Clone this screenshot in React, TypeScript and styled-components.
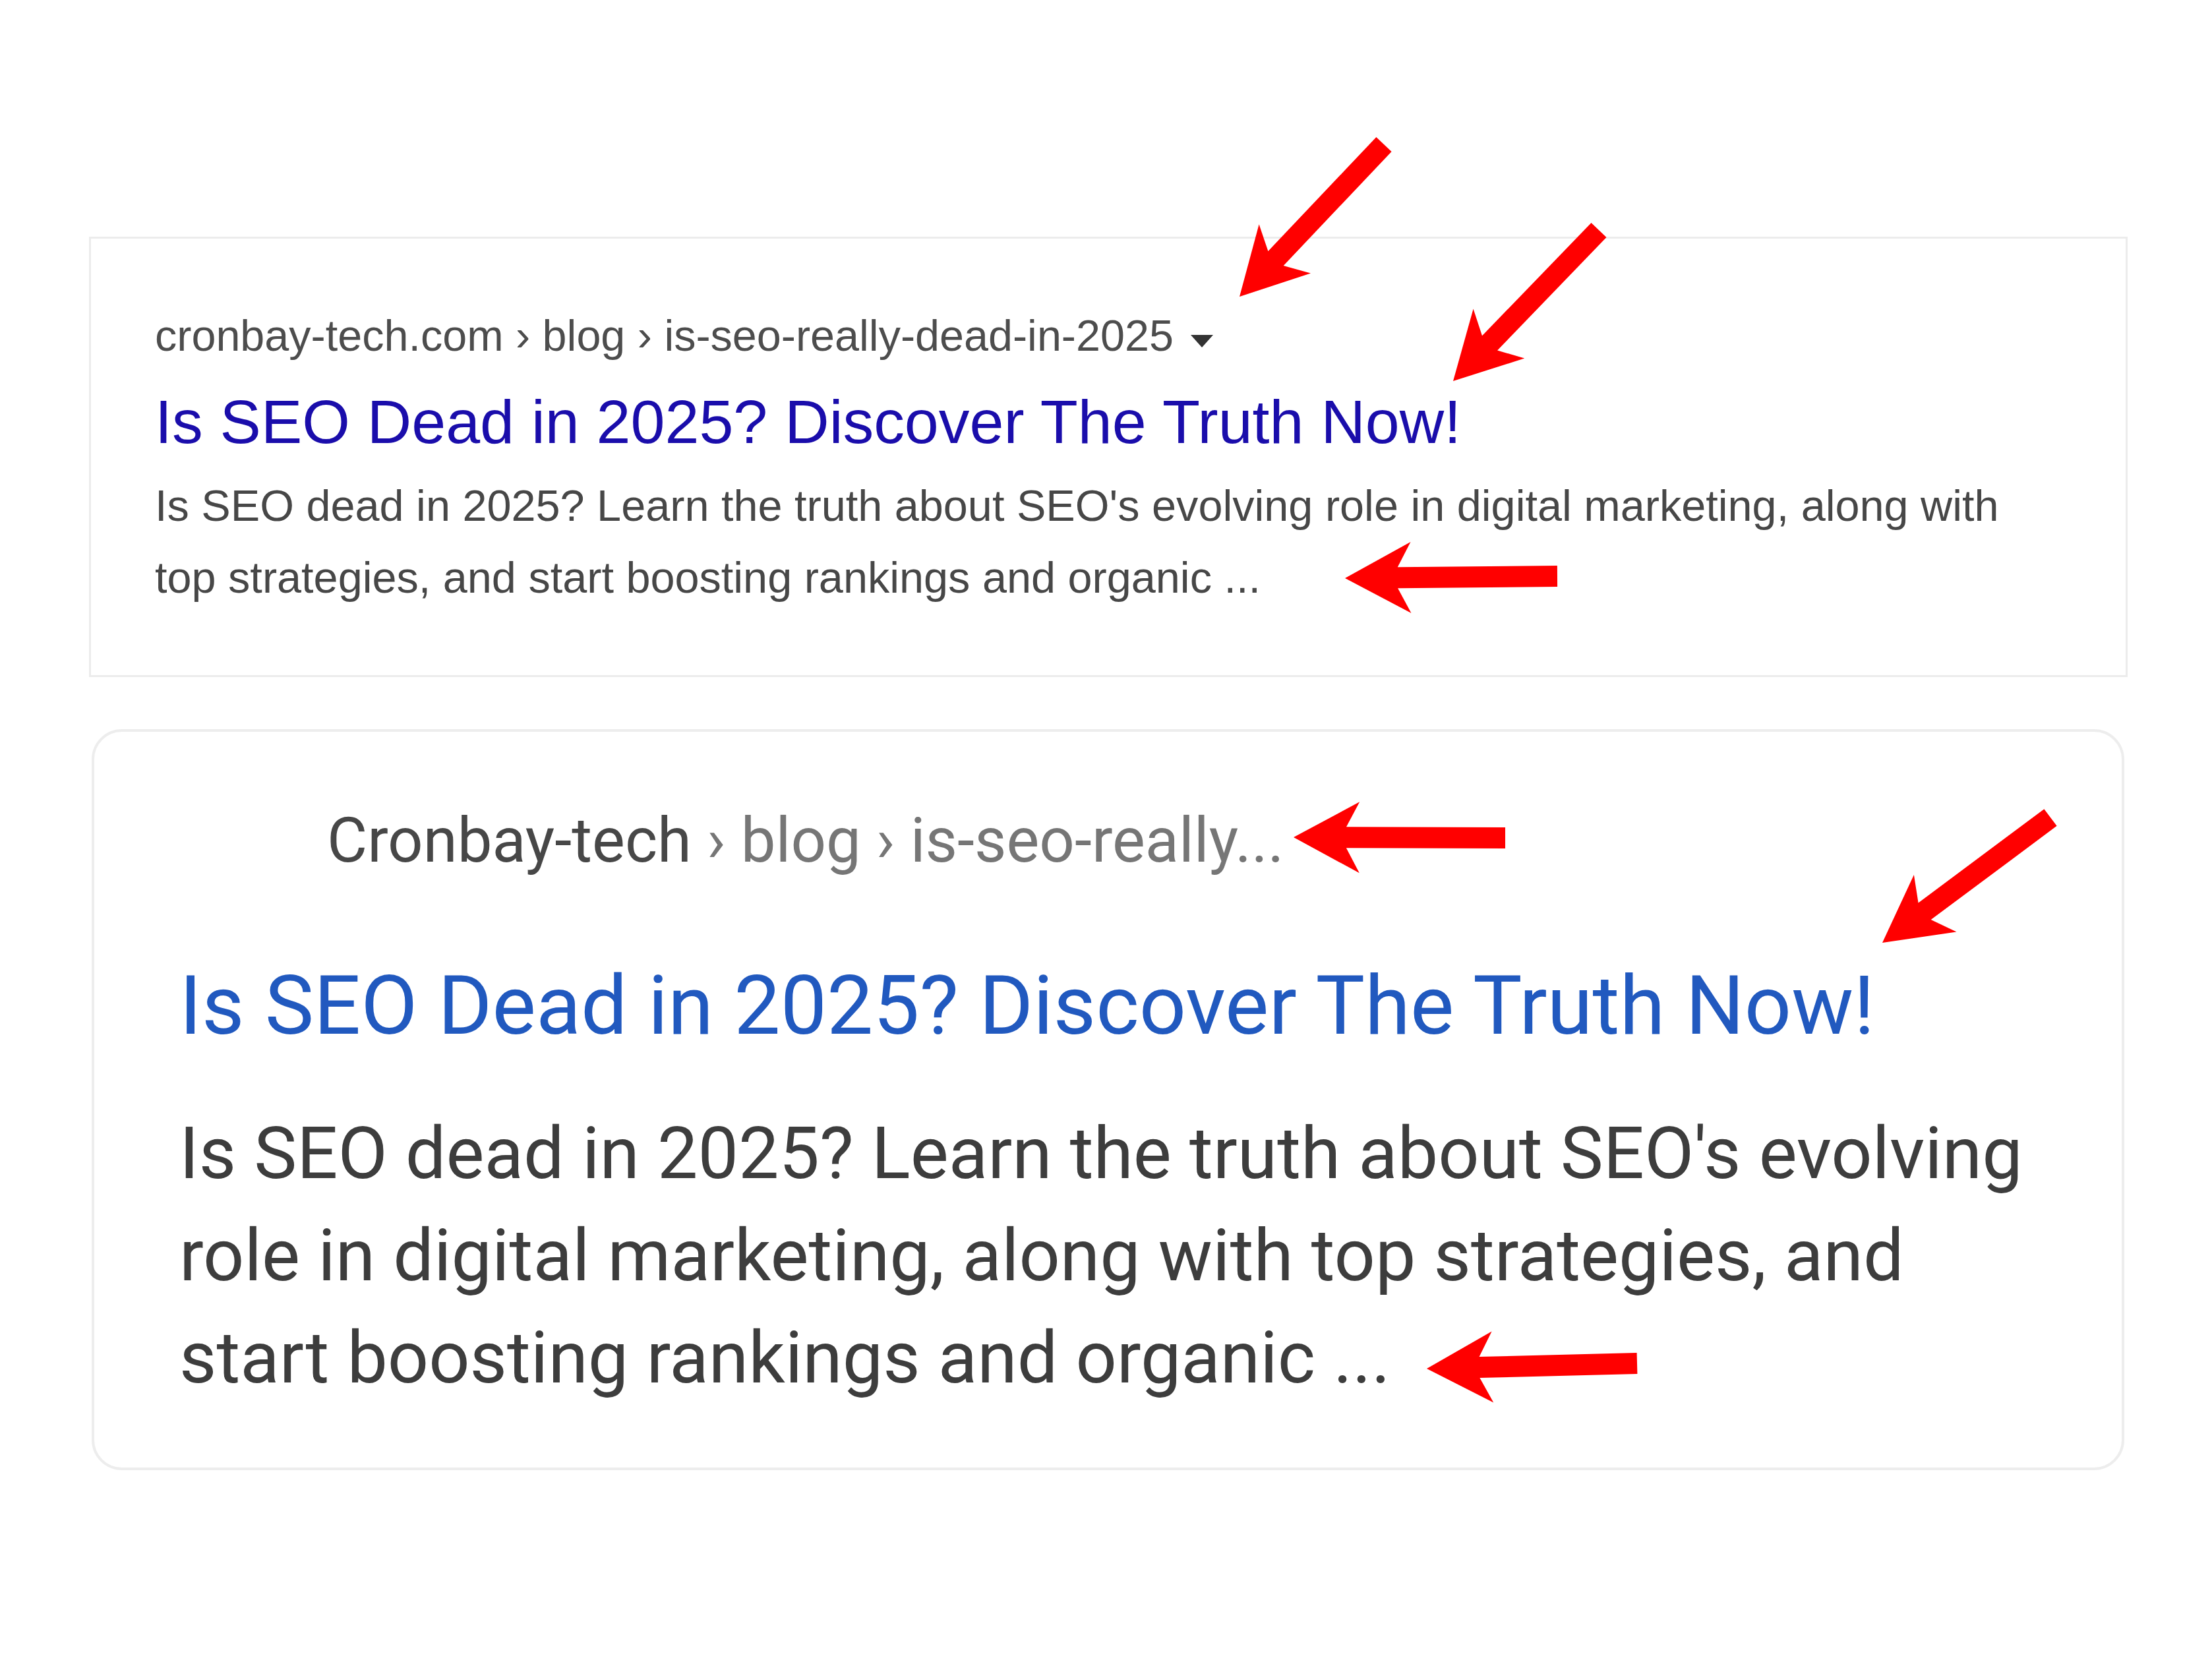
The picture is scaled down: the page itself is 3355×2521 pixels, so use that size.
import React from "react";
import styled, { createGlobalStyle } from "styled-components";

const GlobalStyle = createGlobalStyle`
  html, body {
    margin: 0;
    padding: 0;
    background: #ffffff;
  }
  #root {
    width: 3355px;
    height: 2521px;
  }
`;

const Page = styled.div`
  position: relative;
  box-sizing: border-box;
  width: 3355px;
  height: 2521px;
  padding: 359px 0 0 135px;
  background: #ffffff;
  overflow: hidden;
`;

const Stack = styled.div`
  display: flex;
  flex-direction: column;
  align-items: flex-start;
  gap: 79px;
`;

/* ---------- Classic desktop result ---------- */

const ClassicCard = styled.section`
  box-sizing: border-box;
  width: 3092px;
  height: 668px;
  border: 3px solid #ececec;
  background: #ffffff;
  padding: 107px 100px 0 97px;
  font-family: "Liberation Sans", Arial, sans-serif;
`;

const ClassicCrumb = styled.div`
  display: flex;
  align-items: center;
  font-size: 66.5px;
  line-height: 80px;
  color: #4d4d4d;
  white-space: nowrap;
`;

const Caret = styled.svg`
  width: 34px;
  height: 19px;
  margin-left: 26px;
  margin-top: 16px;
  flex: none;
`;

const ClassicTitle = styled.h3`
  margin: 35px 0 0;
  font-weight: 400;
  font-size: 93.4px;
  line-height: 112px;
  color: #1a0dab;
  white-space: nowrap;
`;

const ClassicSnippet = styled.p`
  margin: 17px 0 0;
  font-size: 66.6px;
  line-height: 109px;
  color: #474747;
`;

/* ---------- Mobile result ---------- */

const MobileCard = styled.section`
  box-sizing: border-box;
  width: 3083px;
  height: 1124px;
  margin-left: 4px;
  border: 4px solid #ededed;
  border-radius: 46px;
  background: #ffffff;
  padding: 108px 80px 0 129px;
  font-family: Roboto, "Liberation Sans", Arial, sans-serif;
`;

const MobileCrumb = styled.div`
  margin-left: 224px;
  font-size: 94px;
  line-height: 114px;
  color: #767676;
  white-space: nowrap;
`;

const Site = styled.span`
  color: #474747;
`;

const MobileTitle = styled.h3`
  margin: 119px 0 0;
  font-weight: 400;
  font-size: 125.2px;
  line-height: 150px;
  color: #2159bf;
  white-space: nowrap;
`;

const MobileSnippet = styled.p`
  margin: 72px 0 0;
  font-size: 109.4px;
  line-height: 155px;
  color: #3d3d3d;
`;

const Line = styled.span`
  display: block;
  white-space: nowrap;
`;

/* ---------- Red annotation arrows ---------- */

const Annotations = styled.svg`
  position: absolute;
  left: 0;
  top: 0;
  width: 3355px;
  height: 2521px;
  pointer-events: none;
`;

type Pt = [number, number];

const arrowPoints = (tail: Pt, tip: Pt): string => {
  const dx = tip[0] - tail[0];
  const dy = tip[1] - tail[1];
  const len = Math.hypot(dx, dy);
  const d: Pt = [dx / len, dy / len];
  const n: Pt = [-d[1], d[0]];
  const headLen = 100;
  const innerLen = 80;
  const headHalf = 54;
  const shaftHalf = 16;
  const at = (back: number, side: number): Pt => [
    tip[0] - d[0] * back + n[0] * side,
    tip[1] - d[1] * back + n[1] * side,
  ];
  const pts: Pt[] = [
    tip,
    at(headLen, headHalf),
    at(innerLen, shaftHalf),
    [tail[0] + n[0] * shaftHalf, tail[1] + n[1] * shaftHalf],
    [tail[0] - n[0] * shaftHalf, tail[1] - n[1] * shaftHalf],
    at(innerLen, -shaftHalf),
    at(headLen, -headHalf),
  ];
  return pts.map((p) => `${p[0].toFixed(1)},${p[1].toFixed(1)}`).join(" ");
};

const arrows: { tail: Pt; tip: Pt }[] = [
  { tail: [2099, 219], tip: [1880, 450] },
  { tail: [2425, 349], tip: [2204, 578] },
  { tail: [2362, 874], tip: [2040, 877] },
  { tail: [2283, 1271], tip: [1962, 1270] },
  { tail: [3110, 1240], tip: [2855, 1430] },
  { tail: [2483, 2068], tip: [2164, 2076] },
];

export default function App() {
  return (
    <>
      <GlobalStyle />
      <Page>
        <Stack>
          <ClassicCard>
            <ClassicCrumb>
              cronbay-tech.com › blog › is-seo-really-dead-in-2025
              <Caret viewBox="0 0 34 19">
                <polygon points="0,0 34,0 17,19" fill="#333333" />
              </Caret>
            </ClassicCrumb>
            <ClassicTitle>Is SEO Dead in 2025? Discover The Truth Now!</ClassicTitle>
            <ClassicSnippet>
              <Line>
                Is SEO dead in 2025? Learn the truth about SEO's evolving role in digital marketing, along with
              </Line>
              <Line>top strategies, and start boosting rankings and organic ...</Line>
            </ClassicSnippet>
          </ClassicCard>

          <MobileCard>
            <MobileCrumb>
              <Site>Cronbay-tech</Site> › blog › is-seo-really...
            </MobileCrumb>
            <MobileTitle>Is SEO Dead in 2025? Discover The Truth Now!</MobileTitle>
            <MobileSnippet>
              <Line>Is SEO dead in 2025? Learn the truth about SEO's evolving</Line>
              <Line>role in digital marketing, along with top strategies, and</Line>
              <Line>start boosting rankings and organic ...</Line>
            </MobileSnippet>
          </MobileCard>
        </Stack>

        <Annotations viewBox="0 0 3355 2521">
          {arrows.map((a, i) => (
            <polygon key={i} points={arrowPoints(a.tail, a.tip)} fill="#ff0000" />
          ))}
        </Annotations>
      </Page>
    </>
  );
}
